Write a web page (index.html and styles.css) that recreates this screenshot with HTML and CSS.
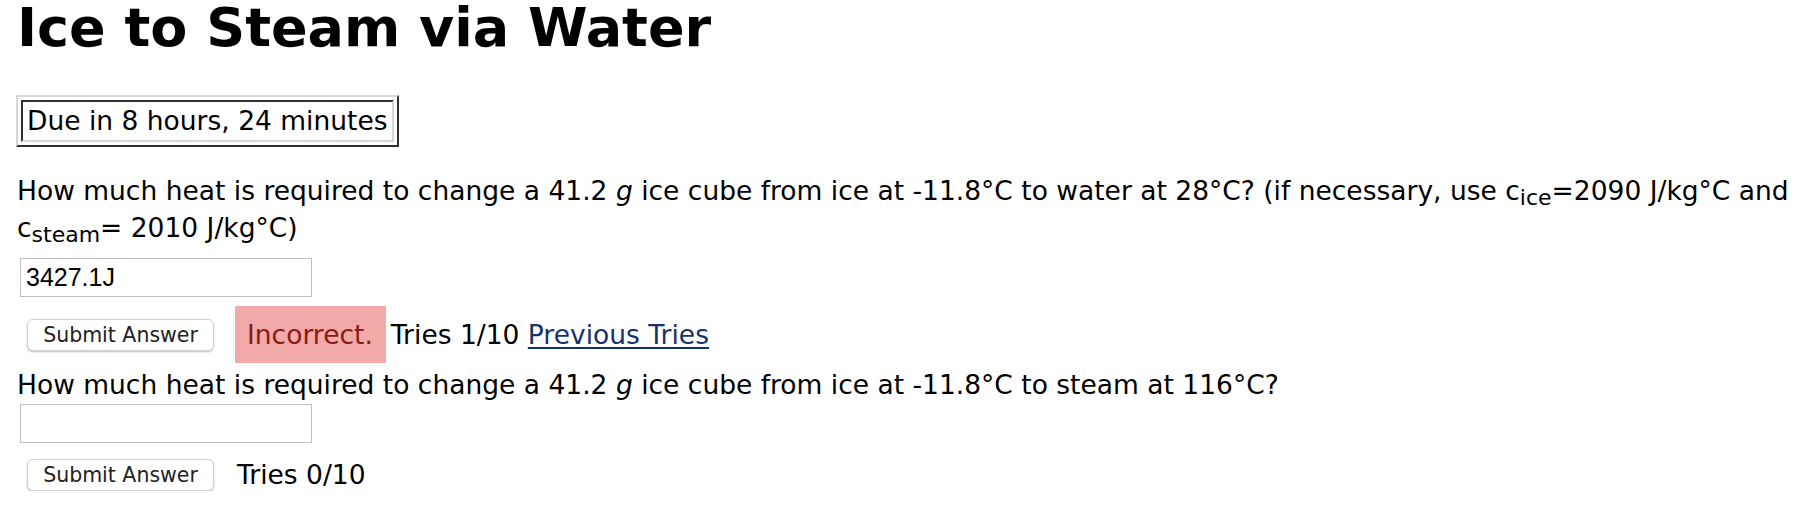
FILE: index.html
```html
<!DOCTYPE html>
<html>
<head>
<meta charset="utf-8">
<link rel="stylesheet" href="styles.css">
<title>Ice to Steam via Water</title>
</head>
<body>
<h1 class="title">Ice to Steam via Water</h1>
<div class="due-wrap">
  <div class="due-outer"><div class="due-inner">Due in 8 hours, 24 minutes</div></div>
</div>
<p class="question q1">How much heat is required to change a 41.2 <i>g</i> ice cube from ice at -11.8°C to water at 28°C? (if necessary, use c<sub>ice</sub>=2090 J/kg°C and c<sub>steam</sub>= 2010 J/kg°C)</p>
<div class="answer a1"><input class="field" type="text" value="3427.1J"></div>
<div class="submit-row r1">
  <button class="submit">Submit Answer</button>
  <span class="incorrect">Incorrect.</span>
  <span class="tries">Tries 1/10 <a class="prev" href="#">Previous Tries</a></span>
</div>
<p class="question q2">How much heat is required to change a 41.2 <i>g</i> ice cube from ice at -11.8°C to steam at 116°C?</p>
<div class="answer a2"><input class="field" type="text" value=""></div>
<div class="submit-row r2">
  <button class="submit">Submit Answer</button>
  <span class="tries tries-none">Tries 0/10</span>
</div>
</body>
</html>
```
FILE: styles.css
```css
html, body {
  margin: 0;
  padding: 0;
  background: #ffffff;
}
body {
  padding: 0 4px 0 17px;
  font-family: "DejaVu Sans", Verdana, sans-serif;
  font-size: 26.5px;
  color: #000;
}
.title {
  font-family: "DejaVu Sans", Verdana, sans-serif;
  font-weight: bold;
  font-size: 54px;
  line-height: 56px;
  margin: 0;
}
.due-wrap {
  margin-top: 39px;
  display: flex;
}
.due-outer {
  border: 2px solid;
  border-color: #d6d6d6 #2e2e2e #2e2e2e #d6d6d6;
  margin-left: -1px;
  padding: 3px;
}
.due-inner {
  border: 2px solid;
  border-color: #2e2e2e #d6d6d6 #d6d6d6 #2e2e2e;
  padding: 3px 4px 3px 4px;
  line-height: 32px;
}
.question {
  margin: 0;
  line-height: 32px;
}
.q1 {
  margin-top: 25px;
  line-height: 37px;
}
.q2 {
  margin-top: 6px;
}
.question sub {
  font-size: 0.83em;
  vertical-align: -5px;
  line-height: 22px;
}
.answer {
  padding-left: 3px;
  display: flex;
}
.a1 {
  margin-top: 12px;
}
.a2 {
  margin-top: 3px;
}
.field {
  box-sizing: border-box;
  width: 292px;
  height: 39px;
  border: 1px solid #bfbfbf;
  font-family: "Liberation Sans", Arial, sans-serif;
  font-size: 25px;
  padding: 0 5px;
  color: #000;
  outline: none;
  margin: 0;
}
.submit-row {
  display: flex;
  align-items: center;
}
.r1 {
  margin-top: 9px;
  height: 57px;
}
.r2 {
  margin-top: 16px;
}
.submit {
  box-sizing: border-box;
  margin: 0 0 0 10px;
  width: 187px;
  height: 32px;
  background: #fff;
  border: 1px solid #d2d2d2;
  border-radius: 6px;
  box-shadow: 0 1px 2px rgba(0,0,0,0.28);
  font-family: "DejaVu Sans", Verdana, sans-serif;
  font-size: 20.5px;
  color: #222;
  padding: 0;
}
.incorrect {
  margin-left: 21px;
  background: #f2aaa8;
  color: #8a1a14;
  height: 57px;
  display: flex;
  align-items: center;
  padding: 0 13px 0 12px;
}
.tries {
  margin-left: 5px;
  line-height: 32px;
}
.tries-none {
  margin-left: 23px;
}
.prev {
  color: #17336a;
  text-decoration: underline;
  text-underline-offset: 3px;
}
```
